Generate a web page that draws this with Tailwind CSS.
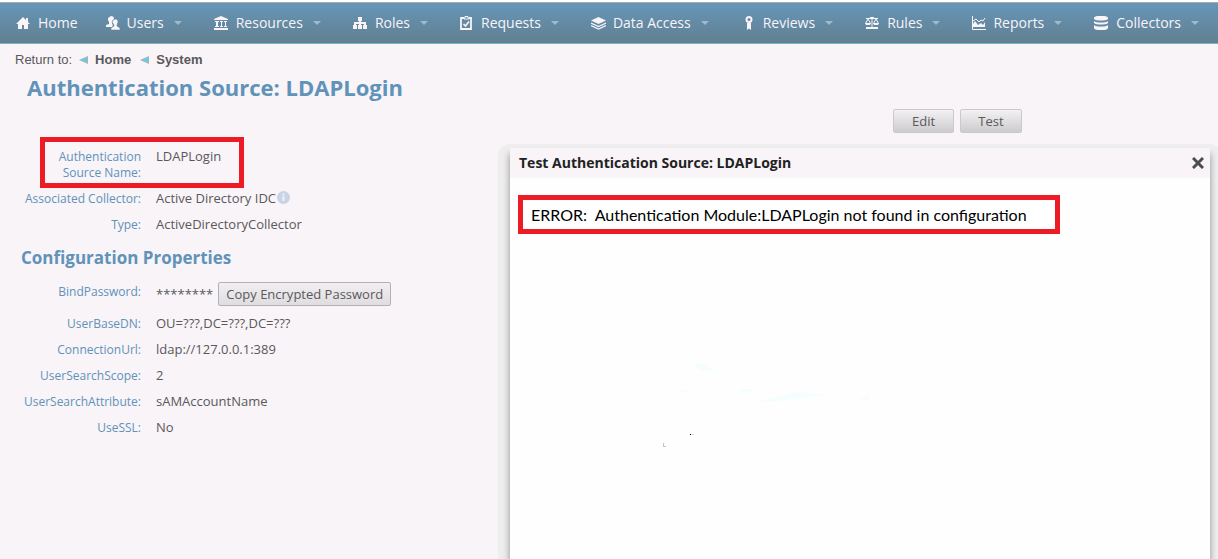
<!DOCTYPE html>
<html lang="en">
<head>
  <meta charset="UTF-8">
  <meta name="viewport" content="width=device-width, initial-scale=1">
  <title>Authentication Source: LDAPLogin</title>
  <script src="https://cdn.jsdelivr.net/npm/@tailwindcss/browser@4"></script>
</head>
<body class="relative min-h-screen overflow-hidden bg-[#f8f4f8] font-['Open_Sans',sans-serif] text-[13px] leading-4 text-[#5a585b]">

  <header class="border-t-2 border-white">
    <nav class="flex h-[42px] items-center gap-8 whitespace-nowrap border-t border-b border-t-[#b0a8a8] border-b-[#6fb9c0] bg-gradient-to-b from-[#6596b9] to-[#627f90] pl-4 text-sm text-[#f8f4f8]">
      <a href="#" class="-mr-1 flex items-center gap-2">
        <svg class="h-[14px] w-[14px]" viewBox="0 0 14 14" fill="currentColor"><path d="M7 1 0 8h2v5h4V9h2v4h4V8h2l-2-2V2h-2v2z"/></svg>
        Home
      </a>
      <a href="#" class="flex items-center">
        <svg class="mr-[7px] h-[14px] w-[14px]" viewBox="0 0 14 14" fill="currentColor"><path d="M5 0c2 0 3 1 3 3L6 5v3l1 1-1 2H0V9l3-1V6L2 4V2z"/><path d="M9 3c2 0 3 1 3 3l-1 3v1l3 2v2H5v-2l3-2V9L6 6l1-2z" stroke="#628caa" stroke-width=".6"/></svg>
        Users
        <svg class="ml-[10px] h-1 w-2" viewBox="0 0 8 4" fill="#a2b9c9"><path d="M0 0h8L4 4z"/></svg>
      </a>
      <a href="#" class="flex items-center">
        <svg class="mr-2 h-[14px] w-[14px]" viewBox="0 0 14 14" fill="currentColor"><path d="M7 0l7 3v1H0V3zM1 5h4v1H4v4h1v1H1v-1h1V6H1zM6 5h3v1H8v4h1v1H6v-1h1V6H6zM10 5h3v1h-1v4h1v1h-3v-1h1V6h-1zM0 12h14v2H0z"/></svg>
        Resources
        <svg class="ml-[10px] h-1 w-2" viewBox="0 0 8 4" fill="#a2b9c9"><path d="M0 0h8L4 4z"/></svg>
      </a>
      <a href="#" class="flex items-center">
        <svg class="mr-2 h-[14px] w-[14px]" viewBox="0 0 14 14" fill="currentColor"><path d="M5 1h4v4H8v1h5v3h1v4h-4V9h1V8H8v1h1v4H5V9h1V8H3v1h1v4H0V9h1V6h5V5H5z"/></svg>
        Roles
        <svg class="ml-[10px] h-1 w-2" viewBox="0 0 8 4" fill="#a2b9c9"><path d="M0 0h8L4 4z"/></svg>
      </a>
      <a href="#" class="flex items-center">
        <svg class="mr-2 h-[14px] w-[13px]" viewBox="0 0 13 14" fill="none" stroke="currentColor"><path d="M4 2H1v11h10V2H9" stroke-width="1.8"/><path d="M4 3V2h1V.5h3V2h1v1z"/><path d="M3.500 8l2 2L9 5.500" stroke-width="1.600"/></svg>
        Requests
        <svg class="ml-[10px] h-1 w-2" viewBox="0 0 8 4" fill="#a2b9c9"><path d="M0 0h8L4 4z"/></svg>
      </a>
      <a href="#" class="flex items-center">
        <svg class="mr-[7px] h-[14px] w-[15px]" viewBox="0 0 15 14" fill="currentColor"><path d="M7.500 1 15 4.500 7.500 8 0 4.500z"/><path d="M0 7l7.500 3.500L15 7M0 9.500L7.500 13 15 9.500" fill="none" stroke="currentColor" stroke-width="1.300"/></svg>
        Data Access
        <svg class="ml-[10px] h-1 w-2" viewBox="0 0 8 4" fill="#a2b9c9"><path d="M0 0h8L4 4z"/></svg>
      </a>
      <a href="#" class="flex items-center">
        <svg class="ml-1 mr-[10px] h-[14px] w-2" viewBox="0 0 8 14" fill="none" stroke="currentColor"><circle cx="4" cy="3.500" r="2.500" stroke-width="2"/><path d="M2 7h4v7L4 12.500 2 14z" fill="currentColor" stroke="none"/></svg>
        Reviews
        <svg class="ml-[10px] h-1 w-2" viewBox="0 0 8 4" fill="#a2b9c9"><path d="M0 0h8L4 4z"/></svg>
      </a>
      <a href="#" class="flex items-center">
        <svg class="mr-2 h-[14px] w-[14px]" viewBox="0 0 14 14" fill="none" stroke="currentColor"><path d="M1 2.500h12M7 1v10M3 3L.5 7.500M3 3l2.500 4.500M11 3L8.500 7.500M11 3l2.500 4.500"/><path d="M0 7h6L5 9H1zM8 7h6l-1 2H9zM1 11h12v2H1zM5 1h4v2H5z" fill="currentColor" stroke="none"/></svg>
        Rules
        <svg class="ml-[10px] h-1 w-2" viewBox="0 0 8 4" fill="#a2b9c9"><path d="M0 0h8L4 4z"/></svg>
      </a>
      <a href="#" class="flex items-center">
        <svg class="mr-[7px] h-[14px] w-[14px]" viewBox="0 0 14 14" fill="none" stroke="currentColor"><path d="M.5 0v13.500H14"/><path d="M1 5l3-2 3 3 2-2 2 1 2-3" /><path d="M1 8l2-3 3 4 3-2 2 2 2-3v5H1z" fill="currentColor" stroke="none"/></svg>
        Reports
        <svg class="ml-[10px] h-1 w-2" viewBox="0 0 8 4" fill="#a2b9c9"><path d="M0 0h8L4 4z"/></svg>
      </a>
      <a href="#" class="flex items-center">
        <svg class="mr-2 h-[14px] w-[14px]" viewBox="0 0 14 14" fill="currentColor"><path d="M0 2c0-3 14-3 14 0v1c-2 2-12 2-14 0zM0 5c2 2 12 2 14 0v2c-2 2-12 2-14 0zM0 9c2 2 12 2 14 0v3c0 3-14 3-14 0z"/></svg>
        Collectors
        <svg class="ml-[10px] h-1 w-2" viewBox="0 0 8 4" fill="#a2b9c9"><path d="M0 0h8L4 4z"/></svg>
      </a>
    </nav>
  </header>

  <main>
    <!-- breadcrumb -->
    <div class="flex items-center pl-[15px] pt-2 font-['Liberation_Sans',sans-serif]">
      <span>Return to:</span>
      <svg class="ml-[7px] mr-[7px] h-2 w-[9px]" viewBox="0 0 9 8"><path d="M0 4l9-4v8z" fill="#b5b0a8"/><path d="M1 4l7-3v5z" fill="#62ccee"/></svg>
      <a href="#" class="font-bold">Home</a>
      <svg class="ml-[9px] mr-[7px] h-2 w-[9px]" viewBox="0 0 9 8"><path d="M0 4l9-4v8z" fill="#b5b0a8"/><path d="M1 4l7-3v5z" fill="#62ccee"/></svg>
      <a href="#" class="font-bold">System</a>
    </div>

    <h1 class="mt-[5px] pl-[27px] text-[22px] font-bold leading-7 text-[#6192b8]">Authentication Source: LDAPLogin</h1>

    <div class="mt-2 flex justify-end gap-[6px] pr-[196px]">
      <button class="h-6 w-[61px] rounded-xs border border-[#cbc9cc] bg-gradient-to-b from-[#f3f1f3] to-[#cdcccd]">Edit</button>
      <button class="h-6 w-[62px] rounded-xs border border-[#cbc9cc] bg-gradient-to-b from-[#f3f1f3] to-[#cdcccd]">Test</button>
    </div>

    <dl class="mt-[10px]">
      <div class="relative flex gap-[15px] pb-1 pt-[5px]">
        <dt class="w-[141px] pl-10 pt-px text-right text-xs leading-4 text-[#6192b8]">Authentication Source Name:</dt>
        <dd>LDAPLogin</dd>
        <div class="absolute -top-[6px] left-10 h-[51px] w-[204px] border-5 border-[#ed1c24]"></div>
      </div>
      <div class="flex gap-[15px] pb-1 pt-[5px]">
        <dt class="w-[141px] pt-px text-right text-xs leading-4 text-[#6192b8]">Associated Collector:</dt>
        <dd class="flex gap-px">Active Directory IDC
          <svg class="mt-px h-[13px] w-[13px]" viewBox="0 0 13 13"><circle cx="6.500" cy="6.500" r="6.500" fill="#c8d4e4"/><path d="M5.500 2.500h2v2h-2zM5 5.500h2.500V10h-2V6.500H5z" fill="#eef2f8"/></svg>
        </dd>
      </div>
      <div class="flex gap-[15px] pb-1 pt-[5px]">
        <dt class="w-[141px] pt-px text-right text-xs leading-4 text-[#6192b8]">Type:</dt>
        <dd>ActiveDirectoryCollector</dd>
      </div>
    </dl>

    <h2 class="mt-[9px] pl-[21px] text-[17px] font-bold leading-6 text-[#6192b8]">Configuration Properties</h2>

    <dl class="mt-2">
      <div class="flex gap-[15px] pb-1 pt-1">
        <dt class="w-[141px] pt-[2px] text-right text-xs leading-4 text-[#6192b8]">BindPassword:</dt>
        <dd class="flex items-center gap-[5px]">********
          <button class="h-6 rounded-xs border border-[#b3b1b4] bg-gradient-to-b from-[#f1eff1] to-[#dfdddf] px-[7px]">Copy Encrypted Password</button>
        </dd>
      </div>
      <div class="flex gap-[15px] pb-1 pt-[5px]">
        <dt class="w-[141px] pt-px text-right text-xs leading-4 text-[#6192b8]">UserBaseDN:</dt>
        <dd>OU=???,DC=???,DC=???</dd>
      </div>
      <div class="flex gap-[15px] pb-1 pt-[5px]">
        <dt class="w-[141px] pt-px text-right text-xs leading-4 text-[#6192b8]">ConnectionUrl:</dt>
        <dd>ldap://127.0.0.1:389</dd>
      </div>
      <div class="flex gap-[15px] pb-1 pt-[5px]">
        <dt class="w-[141px] pt-px text-right text-xs leading-4 text-[#6192b8]">UserSearchScope:</dt>
        <dd>2</dd>
      </div>
      <div class="flex gap-[15px] pb-1 pt-[5px]">
        <dt class="w-[141px] pt-px text-right text-xs leading-4 text-[#6192b8]">UserSearchAttribute:</dt>
        <dd>sAMAccountName</dd>
      </div>
      <div class="flex gap-[15px] pb-1 pt-[5px]">
        <dt class="w-[141px] pt-px text-right text-xs leading-4 text-[#6192b8]">UseSSL:</dt>
        <dd>No</dd>
      </div>
    </dl>
  </main>

  <!-- test result dialog -->
  <div role="dialog" class="absolute -right-1 bottom-0 left-[498px] top-36 flex overflow-hidden rounded-t-xl bg-[#eeeeee] px-3 pt-1">
    <div class="relative flex-1 bg-[#fefefe] shadow-[0_6px_7px_rgba(0,0,0,0.4)]">
      <div class="flex h-[30px] items-center justify-between bg-[#f8f4f8] pl-[9px] pr-[6px]">
        <h3 class="text-sm font-bold text-[#222222]">Test Authentication Source: LDAPLogin</h3>
        <button aria-label="Close">
          <svg class="h-3 w-3" viewBox="0 0 12 12" stroke="#4c4e4e" stroke-width="3"><path d="M1 1l10 10M11 1L1 11"/></svg>
        </button>
      </div>
      <p class="ml-2 mt-[17px] w-[542px] whitespace-pre border-5 border-[#ed1c24] bg-white pb-1 pl-2 pt-[5px] font-['Lato',sans-serif] text-base leading-5 text-black">ERROR:  Authentication Module:LDAPLogin not found in configuration</p>
      <svg class="absolute left-[130px] top-[202px] h-[110px] w-[250px]" viewBox="0 0 250 110">
        <path d="M53 13l12 2 9 6H60zM100 44l2-5h18zM118 52l38-10 32 3-58 7zM33 42l14-2v2zM218 50l11-4v4z" fill="#f5fefe"/>
        <path d="M50 84h1v1h-1z" fill="#000000"/>
        <path d="M51 84h3v1h-3z" fill="#dddddd"/>
        <path d="M23 93h1v3h2v1h-3z" fill="#c4c4c4"/>
      </svg>
    </div>
  </div>

</body>
</html>
